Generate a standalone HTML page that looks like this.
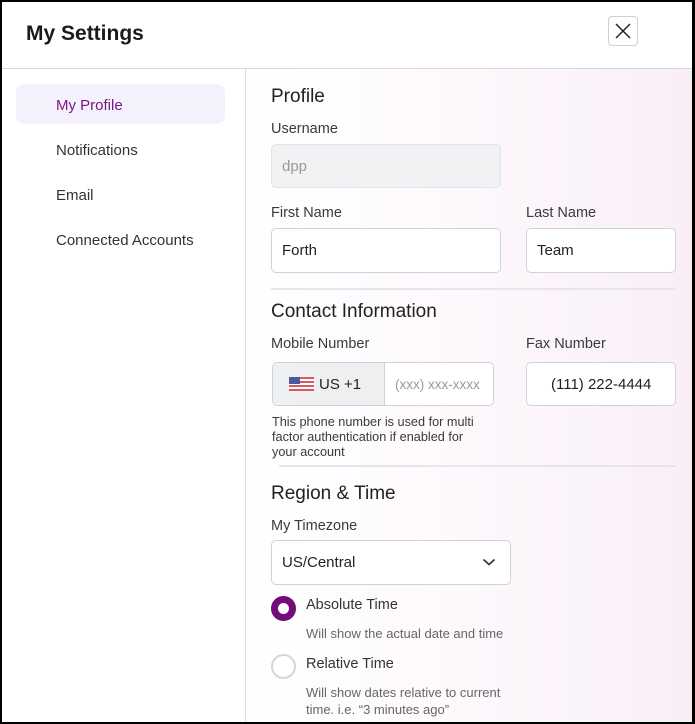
<!DOCTYPE html>
<html><head><meta charset="utf-8"><style>
*{box-sizing:border-box;margin:0;padding:0}
body{width:695px;height:724px;overflow:hidden;font-family:"Liberation Sans",sans-serif;background:#fff;position:relative;color:#2b2b2b}
.frame{position:absolute;left:0;top:0;width:695px;height:724px;border:2px solid #000;border-right-width:3px;z-index:10;pointer-events:none}
.a{position:absolute;white-space:nowrap}
.hdr{left:0;top:0;width:695px;height:69px;border-bottom:1px solid #d8d8d8}
.side{left:0;top:69px;width:246px;height:655px;border-right:1px solid #dcdcdc;background:#fff}
.main{left:246px;top:69px;width:449px;height:655px;background:linear-gradient(90deg,#fff 0%,#fdf8fc 50%,#f9eef8 100%)}
.lbl{font-size:14.5px;color:#3a3a3a}
.h{font-size:19px;color:#222}
.inp{border:1px solid #cfd3d8;border-radius:5px;background:#fff;font-size:15px;color:#222;padding-left:10px;display:flex;align-items:center}
.hr{height:2px;background:#e4e6ea}
.nav{font-size:15px;color:#333}
.small{font-size:12.7px;color:#3a3a3a;line-height:15px;white-space:normal}
.desc{font-size:13px;color:#666;line-height:17px;white-space:normal}
</style></head><body>
<div class="frame"></div>
<div class="a hdr"></div>
<div class="a" style="left:26px;top:22px;font-size:21px;font-weight:bold;color:#1a1a1a">My Settings</div>
<div class="a" style="left:608px;top:16px;width:30px;height:30px;border:1px solid #cfcfcf;border-radius:4px;background:#fff">
<svg width="28" height="28" viewBox="0 0 28 28"><path d="M7 7L21 21M21 7L7 21" stroke="#222" stroke-width="1.5"/></svg></div>
<div class="a side"></div>
<div class="a" style="left:16px;top:84px;width:209px;height:40px;background:#f4f1fd;border-radius:8px"></div>
<div class="a nav" style="left:56px;top:97px;color:#7a167d">My Profile</div>
<div class="a nav" style="left:56px;top:142px">Notifications</div>
<div class="a nav" style="left:56px;top:187px">Email</div>
<div class="a nav" style="left:56px;top:232px">Connected Accounts</div>
<div class="a main"></div>
<div class="a h" style="left:271px;top:86px">Profile</div>
<div class="a lbl" style="left:271px;top:121px">Username</div>
<div class="a inp" style="left:271px;top:144px;width:230px;height:44px;background:#f1f2f4;color:#999;border-color:#e2e4e7">dpp</div>
<div class="a lbl" style="left:271px;top:205px">First Name</div>
<div class="a lbl" style="left:526px;top:205px">Last Name</div>
<div class="a inp" style="left:271px;top:228px;width:230px;height:45px">Forth</div>
<div class="a inp" style="left:526px;top:228px;width:150px;height:45px">Team</div>
<div class="a hr" style="left:271px;top:288px;width:405px"></div>
<div class="a h" style="left:271px;top:301px">Contact Information</div>
<div class="a lbl" style="left:271px;top:336px">Mobile Number</div>
<div class="a lbl" style="left:526px;top:336px">Fax Number</div>
<div class="a" style="left:272px;top:362px;width:222px;height:44px;border:1px solid #cfd3d8;border-radius:5px;background:#fff;overflow:hidden">
<div class="a" style="left:0;top:0;width:112px;height:42px;background:#eeeff1;border-right:1px solid #cfd3d8"></div>
<svg class="a" style="left:16px;top:14px" width="25" height="14" viewBox="0 0 25 14"><rect width="25" height="14" fill="#fff"/><g fill="#d65a5f"><rect y="0" width="25" height="2"/><rect y="4" width="25" height="2"/><rect y="8" width="25" height="2"/><rect y="12" width="25" height="2"/></g><rect width="11" height="7" fill="#4a5a9a"/></svg>
<div class="a" style="left:46px;top:13px;font-size:15px;color:#222">US +1</div>
<div class="a" style="left:122px;top:14px;font-size:13.5px;color:#999">(xxx) xxx-xxxx</div>
</div>
<div class="a inp" style="left:526px;top:362px;width:150px;height:44px;padding-left:24px">(111) 222-4444</div>
<div class="a small" style="left:272px;top:415px;width:215px">This phone number is used for multi factor authentication if enabled for your account</div>
<div class="a hr" style="left:279px;top:465px;width:397px"></div>
<div class="a h" style="left:271px;top:483px">Region &amp; Time</div>
<div class="a lbl" style="left:271px;top:518px">My Timezone</div>
<div class="a inp" style="left:271px;top:540px;width:240px;height:45px">US/Central
<svg class="a" style="left:210px;top:16px" width="14" height="10" viewBox="0 0 14 10"><path d="M1.5 2.5L7 7.5L12.5 2.5" stroke="#333" stroke-width="1.6" fill="none"/></svg></div>
<div class="a" style="left:271px;top:596px;width:25px;height:25px;border-radius:50%;border:7px solid #730c7a;background:#fff"></div>
<div class="a" style="left:306px;top:597px;font-size:14.5px;color:#333">Absolute Time</div>
<div class="a desc" style="left:306px;top:625px">Will show the actual date and time</div>
<div class="a" style="left:271px;top:654px;width:25px;height:25px;border-radius:50%;border:2px solid #d2d6dc;background:#fff"></div>
<div class="a" style="left:306px;top:656px;font-size:14.5px;color:#333">Relative Time</div>
<div class="a desc" style="left:306px;top:684px;width:220px">Will show dates relative to current time. i.e. “3 minutes ago”</div>
</body></html>
